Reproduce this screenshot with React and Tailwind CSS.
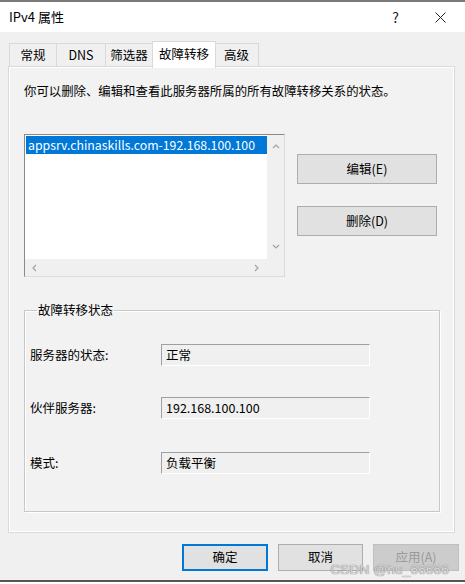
import React from "react";

const F = { fontFamily: '"Noto Sans CJK SC", "Noto Sans", sans-serif' };

function Chevron({ dir, className }) {
  const paths = {
    up: "M1 5 L4 2 L7 5",
    down: "M1 2 L4 5 L7 2",
    left: "M5 1 L2 4 L5 7",
    right: "M2 1 L5 4 L2 7",
  };
  return (
    <svg width="8" height="8" viewBox="0 0 8 8" className={className}>
      <path d={paths[dir]} fill="none" stroke="#a3a3a3" strokeWidth="1.2" />
    </svg>
  );
}

function Tab({ label, w, active }) {
  if (active) {
    return (
      <div
        className="relative z-10 -mb-[2px] flex h-[27px] items-start justify-center border border-b-0 border-[#d9d9d9] bg-white pt-[3px] text-[12.5px] text-black"
        style={{ width: w }}
      >
        {label}
      </div>
    );
  }
  return (
    <div
      className="-ml-px flex h-[23px] items-center justify-center border border-b-0 border-[#d9d9d9] bg-[#f0f0f0] text-[12.5px] text-black first:ml-0"
      style={{ width: w }}
    >
      {label}
    </div>
  );
}

function Field({ label, value, mt }) {
  return (
    <div className={`flex items-center ${mt}`}>
      <div className="w-[131px] text-[12.5px] text-black">{label}</div>
      <div className="flex h-[22px] w-[209px] items-center border-t border-l border-t-[#a0a0a0] border-l-[#a0a0a0] border-b border-r border-b-white border-r-white bg-[#f0f0f0] pl-[4px] text-[12.5px] text-black">
        {value}
      </div>
    </div>
  );
}

export default function App() {
  return (
    <div
      className="relative flex h-[584px] w-[465px] flex-col overflow-hidden bg-[#f0f0f0]"
      style={F}
    >
      <div className="h-[2px] bg-[#7a7a7a]" />
      {/* title bar */}
      <div className="flex h-[30px] items-center bg-white pl-[9px]">
        <span className="text-[13px] text-black">IPv4 属性</span>
        <span className="ml-auto mr-[36px] text-[14px] text-[#222]">?</span>
        <svg width="11" height="11" viewBox="0 0 11 11" className="mr-[19px]">
          <path d="M0.5 0.5 L10.5 10.5 M10.5 0.5 L0.5 10.5" stroke="#222" strokeWidth="1" />
        </svg>
      </div>

      {/* tabs */}
      <div className="mt-[9px] flex items-end pl-[9px]">
        <Tab label="常规" w={48} />
        <Tab label="DNS" w={50} />
        <Tab label="筛选器" w={48} />
        <div className="-ml-px" />
        <Tab label="故障转移" w={64} active />
        <div className="-ml-px" />
        <Tab label="高级" w={45} />
      </div>

      {/* panel */}
      <div className="ml-[8px] flex h-[467px] w-[447px] flex-col border border-[#d9d9d9] bg-[#f2f2f2] pl-[15px] shadow-[inset_1px_1px_0_#ffffff,inset_-1px_-1px_0_#ffffff]">
        <div className="mt-[16px] text-[12.4px] leading-[16px] text-black">
          你可以删除、编辑和查看此服务器所属的所有故障转移关系的状态。
        </div>

        <div className="mt-[35px] flex">
          {/* list box */}
          <div className="flex h-[143px] w-[261px] flex-col border-t border-l border-t-[#8a8a8a] border-l-[#8a8a8a] border-r border-b border-r-[#dcdcdc] border-b-[#dcdcdc] bg-white">
            <div className="flex flex-1">
              <div className="flex-1 pt-px pl-px">
                <div className="flex h-[18px] items-center bg-[#0078d7] pl-[2px] text-[12.3px] text-white">
                  appsrv.chinaskills.com-192.168.100.100
                </div>
              </div>
              <div className="flex w-[17px] flex-col items-center justify-between bg-[#f0f0f0] py-[8px]">
                <Chevron dir="up" />
                <Chevron dir="down" />
              </div>
            </div>
            <div className="flex h-[17px]">
              <div className="flex flex-1 items-center justify-between bg-[#f0f0f0] px-[6px]">
                <Chevron dir="left" />
                <Chevron dir="right" />
              </div>
              <div className="w-[17px] bg-[#f0f0f0]" />
            </div>
          </div>

          {/* buttons */}
          <div className="ml-[12px] flex flex-col pt-[20px]">
            <button className="h-[30px] w-[140px] border border-[#adadad] bg-[#e1e1e1] text-[12.5px] text-black">
              编辑(E)
            </button>
            <button className="mt-[22px] h-[30px] w-[140px] border border-[#adadad] bg-[#e1e1e1] text-[12.5px] text-black">
              删除(D)
            </button>
          </div>
        </div>

        {/* group box */}
        <fieldset className="mt-[25px] h-[210px] w-[416px] border border-[#c8c8c8] px-[5px] shadow-[1px_1px_0_#ffffff,inset_1px_1px_0_#ffffff]">
          <legend className="ml-[7px] px-px text-[12.5px] leading-[16px] text-black">
            故障转移状态
          </legend>
          <Field label="服务器的状态:" value="正常" mt="mt-[26px]" />
          <Field label="伙伴服务器:" value="192.168.100.100" mt="mt-[31px]" />
          <Field label="模式:" value="负载平衡" mt="mt-[33px]" />
        </fieldset>
      </div>

      {/* bottom buttons */}
      <div className="mt-[11px] flex gap-[10px] pl-[182px]">
        <button className="h-[27px] w-[86px] border-2 border-[#0078d7] bg-[#e1e1e1] text-[12.5px] text-black">
          确定
        </button>
        <button className="h-[27px] w-[85px] border border-[#adadad] bg-[#e1e1e1] text-[12.5px] text-black">
          取消
        </button>
        <button className="h-[27px] w-[86px] border border-[#bfbfbf] bg-[#cccccc] text-[12.5px] text-[#9a9a9a]">
          应用(A)
        </button>
      </div>

      <div className="mt-auto h-[2px] bg-[#555]" />
      <div className="h-[2px] bg-white" />

      {/* watermark */}
      <div
        className="absolute right-[16px] top-[560px] text-[13.5px] tracking-[0.2px] text-[#dadada]"
        style={{
          fontFamily: '"Liberation Sans", sans-serif',
          textShadow: "0 0 1px #888, 0 0 1px #888",
        }}
      >
        CSDN @hu_66666
      </div>
    </div>
  );
}
